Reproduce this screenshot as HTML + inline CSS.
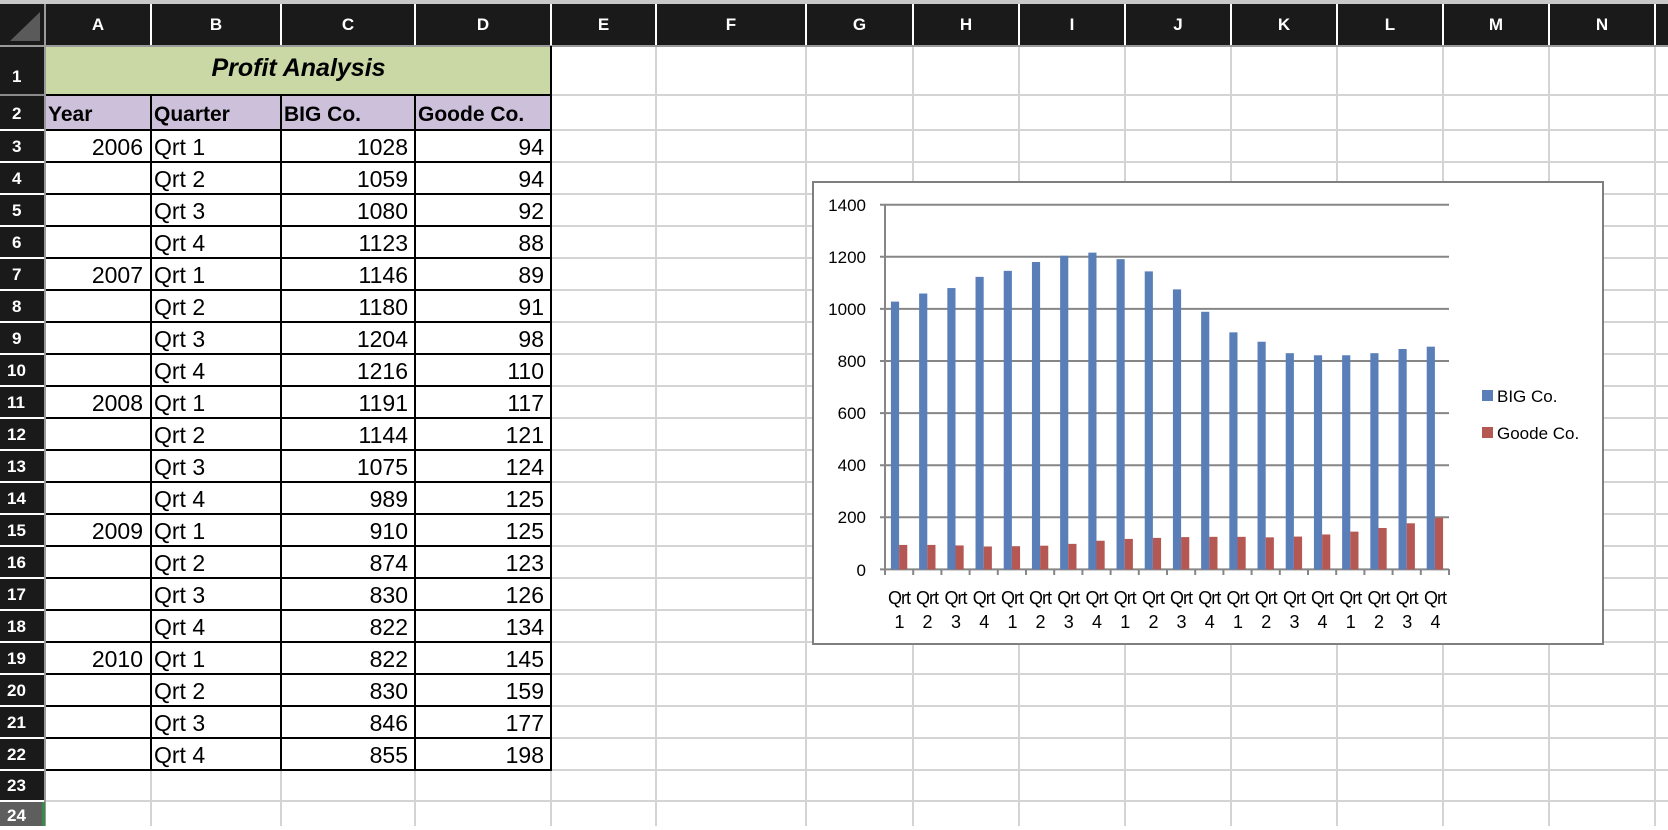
<!DOCTYPE html>
<html><head><meta charset="utf-8">
<style>
*{margin:0;padding:0;box-sizing:border-box}
body{width:1668px;height:826px;overflow:hidden;background:#fff;position:relative;font-family:"Liberation Sans",Arial,sans-serif}
.a{position:absolute}
.hd{position:absolute;top:4px;height:41px;background:#1a1a1a;color:#fff;font-weight:bold;font-size:17px;text-align:center;line-height:42px}
.rh{position:absolute;left:0;width:44px;background:#1a1a1a;color:#fff;font-weight:bold;font-size:17px;padding-left:12px}
.vl{position:absolute;width:2px;background:#d4d4d4}
.hl{position:absolute;height:2px;background:#d4d4d4}
.c{position:absolute;font-size:23px;height:32px;line-height:35px;white-space:nowrap}
.r{text-align:right}
.bk{position:absolute;background:#000}
</style></head><body>
<div class="a" style="left:0;top:0;width:1668px;height:4px;background:#c8c8c8"></div>
<div class="a" style="left:0;top:45px;width:1668px;height:2px;background:#9a9a9a"></div>
<div class="a" style="left:0;top:4px;width:44px;height:41px;background:#1a1a1a"></div>
<svg class="a" style="left:0;top:4px" width="44" height="41"><polygon points="10,37 40,37 40,8" fill="#5a5a5a"/></svg>
<div class="a" style="left:44px;top:4px;width:2px;height:822px;background:#9a9a9a"></div>
<div class="hd" style="left:46px;width:104px">A</div>
<div class="hd" style="left:152px;width:128px">B</div>
<div class="hd" style="left:282px;width:132px">C</div>
<div class="hd" style="left:416px;width:134px">D</div>
<div class="hd" style="left:552px;width:103px">E</div>
<div class="hd" style="left:657px;width:148px">F</div>
<div class="hd" style="left:807px;width:105px">G</div>
<div class="hd" style="left:914px;width:104px">H</div>
<div class="hd" style="left:1020px;width:104px">I</div>
<div class="hd" style="left:1126px;width:104px">J</div>
<div class="hd" style="left:1232px;width:104px">K</div>
<div class="hd" style="left:1338px;width:104px">L</div>
<div class="hd" style="left:1444px;width:104px">M</div>
<div class="hd" style="left:1550px;width:104px">N</div>
<div class="hd" style="left:1656px;width:12px"></div>
<div class="rh" style="top:47px;height:47px;line-height:60px">1</div>
<div class="rh" style="top:96px;height:33px;line-height:36px">2</div>
<div class="rh" style="top:131px;height:30px;line-height:32px">3</div>
<div class="rh" style="top:163px;height:30px;line-height:32px">4</div>
<div class="rh" style="top:195px;height:30px;line-height:32px">5</div>
<div class="rh" style="top:227px;height:30px;line-height:32px">6</div>
<div class="rh" style="top:259px;height:30px;line-height:32px">7</div>
<div class="rh" style="top:291px;height:30px;line-height:32px">8</div>
<div class="rh" style="top:323px;height:30px;line-height:32px">9</div>
<div class="rh" style="top:355px;height:30px;line-height:32px;padding-left:7px">10</div>
<div class="rh" style="top:387px;height:30px;line-height:32px;padding-left:7px">11</div>
<div class="rh" style="top:419px;height:30px;line-height:32px;padding-left:7px">12</div>
<div class="rh" style="top:451px;height:30px;line-height:32px;padding-left:7px">13</div>
<div class="rh" style="top:483px;height:30px;line-height:32px;padding-left:7px">14</div>
<div class="rh" style="top:515px;height:30px;line-height:32px;padding-left:7px">15</div>
<div class="rh" style="top:547px;height:30px;line-height:32px;padding-left:7px">16</div>
<div class="rh" style="top:579px;height:30px;line-height:32px;padding-left:7px">17</div>
<div class="rh" style="top:611px;height:30px;line-height:32px;padding-left:7px">18</div>
<div class="rh" style="top:643px;height:30px;line-height:32px;padding-left:7px">19</div>
<div class="rh" style="top:675px;height:30px;line-height:32px;padding-left:7px">20</div>
<div class="rh" style="top:707px;height:30px;line-height:32px;padding-left:7px">21</div>
<div class="rh" style="top:739px;height:30px;line-height:32px;padding-left:7px">22</div>
<div class="rh" style="top:771px;height:29px;line-height:30px;padding-left:7px">23</div>
<div class="rh" style="top:802px;height:24px;line-height:28px;padding-left:7px;background:#5e5e5e">24</div>
<div class="a" style="left:42px;top:802px;width:3px;height:24px;background:#3a8a4a"></div>

<div class="vl" style="left:150px;top:47px;height:779px"></div>
<div class="vl" style="left:280px;top:47px;height:779px"></div>
<div class="vl" style="left:414px;top:47px;height:779px"></div>
<div class="vl" style="left:550px;top:47px;height:779px"></div>
<div class="vl" style="left:655px;top:47px;height:779px"></div>
<div class="vl" style="left:805px;top:47px;height:779px"></div>
<div class="vl" style="left:912px;top:47px;height:779px"></div>
<div class="vl" style="left:1018px;top:47px;height:779px"></div>
<div class="vl" style="left:1124px;top:47px;height:779px"></div>
<div class="vl" style="left:1230px;top:47px;height:779px"></div>
<div class="vl" style="left:1336px;top:47px;height:779px"></div>
<div class="vl" style="left:1442px;top:47px;height:779px"></div>
<div class="vl" style="left:1548px;top:47px;height:779px"></div>
<div class="vl" style="left:1654px;top:47px;height:779px"></div>
<div class="hl" style="left:0;top:94px;background:#8a8a8a;width:44px"></div>
<div class="hl" style="left:46px;top:94px;width:1622px"></div>
<div class="hl" style="left:46px;top:129px;width:1622px"></div>
<div class="hl" style="left:46px;top:161px;width:1622px"></div>
<div class="hl" style="left:46px;top:193px;width:1622px"></div>
<div class="hl" style="left:46px;top:225px;width:1622px"></div>
<div class="hl" style="left:46px;top:257px;width:1622px"></div>
<div class="hl" style="left:46px;top:289px;width:1622px"></div>
<div class="hl" style="left:46px;top:321px;width:1622px"></div>
<div class="hl" style="left:46px;top:353px;width:1622px"></div>
<div class="hl" style="left:46px;top:385px;width:1622px"></div>
<div class="hl" style="left:46px;top:417px;width:1622px"></div>
<div class="hl" style="left:46px;top:449px;width:1622px"></div>
<div class="hl" style="left:46px;top:481px;width:1622px"></div>
<div class="hl" style="left:46px;top:513px;width:1622px"></div>
<div class="hl" style="left:46px;top:545px;width:1622px"></div>
<div class="hl" style="left:46px;top:577px;width:1622px"></div>
<div class="hl" style="left:46px;top:609px;width:1622px"></div>
<div class="hl" style="left:46px;top:641px;width:1622px"></div>
<div class="hl" style="left:46px;top:673px;width:1622px"></div>
<div class="hl" style="left:46px;top:705px;width:1622px"></div>
<div class="hl" style="left:46px;top:737px;width:1622px"></div>
<div class="hl" style="left:46px;top:769px;width:1622px"></div>
<div class="hl" style="left:46px;top:800px;width:1622px"></div>

<div class="a" style="left:46px;top:47px;width:505px;height:48px;background:#c9d8a5"></div>
<div class="a" style="left:46px;top:95px;width:505px;height:35px;background:#ccc0da"></div>
<div class="a" style="left:46px;top:130px;width:505px;height:640px;background:#fff"></div>
<div class="a" style="left:46px;top:47px;width:505px;height:48px;text-align:center;font-weight:bold;font-style:italic;font-size:25px;line-height:42px">Profit Analysis</div>
<div class="c" style="left:48px;top:96px;font-weight:bold;font-size:21px;line-height:38px">Year</div>
<div class="c" style="left:154px;top:96px;font-weight:bold;font-size:21px;line-height:38px">Quarter</div>
<div class="c" style="left:284px;top:96px;font-weight:bold;font-size:21px;line-height:38px">BIG Co.</div>
<div class="c" style="left:418px;top:96px;font-weight:bold;font-size:21px;line-height:38px">Goode Co.</div>

<div class="c r" style="left:46px;width:97px;top:130px">2006</div>
<div class="c r" style="left:46px;width:97px;top:258px">2007</div>
<div class="c r" style="left:46px;width:97px;top:386px">2008</div>
<div class="c r" style="left:46px;width:97px;top:514px">2009</div>
<div class="c r" style="left:46px;width:97px;top:642px">2010</div>

<div class="c" style="left:154px;top:130px">Qrt 1</div><div class="c r" style="left:282px;width:126px;top:130px">1028</div><div class="c r" style="left:416px;width:128px;top:130px">94</div>
<div class="c" style="left:154px;top:162px">Qrt 2</div><div class="c r" style="left:282px;width:126px;top:162px">1059</div><div class="c r" style="left:416px;width:128px;top:162px">94</div>
<div class="c" style="left:154px;top:194px">Qrt 3</div><div class="c r" style="left:282px;width:126px;top:194px">1080</div><div class="c r" style="left:416px;width:128px;top:194px">92</div>
<div class="c" style="left:154px;top:226px">Qrt 4</div><div class="c r" style="left:282px;width:126px;top:226px">1123</div><div class="c r" style="left:416px;width:128px;top:226px">88</div>
<div class="c" style="left:154px;top:258px">Qrt 1</div><div class="c r" style="left:282px;width:126px;top:258px">1146</div><div class="c r" style="left:416px;width:128px;top:258px">89</div>
<div class="c" style="left:154px;top:290px">Qrt 2</div><div class="c r" style="left:282px;width:126px;top:290px">1180</div><div class="c r" style="left:416px;width:128px;top:290px">91</div>
<div class="c" style="left:154px;top:322px">Qrt 3</div><div class="c r" style="left:282px;width:126px;top:322px">1204</div><div class="c r" style="left:416px;width:128px;top:322px">98</div>
<div class="c" style="left:154px;top:354px">Qrt 4</div><div class="c r" style="left:282px;width:126px;top:354px">1216</div><div class="c r" style="left:416px;width:128px;top:354px">110</div>
<div class="c" style="left:154px;top:386px">Qrt 1</div><div class="c r" style="left:282px;width:126px;top:386px">1191</div><div class="c r" style="left:416px;width:128px;top:386px">117</div>
<div class="c" style="left:154px;top:418px">Qrt 2</div><div class="c r" style="left:282px;width:126px;top:418px">1144</div><div class="c r" style="left:416px;width:128px;top:418px">121</div>
<div class="c" style="left:154px;top:450px">Qrt 3</div><div class="c r" style="left:282px;width:126px;top:450px">1075</div><div class="c r" style="left:416px;width:128px;top:450px">124</div>
<div class="c" style="left:154px;top:482px">Qrt 4</div><div class="c r" style="left:282px;width:126px;top:482px">989</div><div class="c r" style="left:416px;width:128px;top:482px">125</div>
<div class="c" style="left:154px;top:514px">Qrt 1</div><div class="c r" style="left:282px;width:126px;top:514px">910</div><div class="c r" style="left:416px;width:128px;top:514px">125</div>
<div class="c" style="left:154px;top:546px">Qrt 2</div><div class="c r" style="left:282px;width:126px;top:546px">874</div><div class="c r" style="left:416px;width:128px;top:546px">123</div>
<div class="c" style="left:154px;top:578px">Qrt 3</div><div class="c r" style="left:282px;width:126px;top:578px">830</div><div class="c r" style="left:416px;width:128px;top:578px">126</div>
<div class="c" style="left:154px;top:610px">Qrt 4</div><div class="c r" style="left:282px;width:126px;top:610px">822</div><div class="c r" style="left:416px;width:128px;top:610px">134</div>
<div class="c" style="left:154px;top:642px">Qrt 1</div><div class="c r" style="left:282px;width:126px;top:642px">822</div><div class="c r" style="left:416px;width:128px;top:642px">145</div>
<div class="c" style="left:154px;top:674px">Qrt 2</div><div class="c r" style="left:282px;width:126px;top:674px">830</div><div class="c r" style="left:416px;width:128px;top:674px">159</div>
<div class="c" style="left:154px;top:706px">Qrt 3</div><div class="c r" style="left:282px;width:126px;top:706px">846</div><div class="c r" style="left:416px;width:128px;top:706px">177</div>
<div class="c" style="left:154px;top:738px">Qrt 4</div><div class="c r" style="left:282px;width:126px;top:738px">855</div><div class="c r" style="left:416px;width:128px;top:738px">198</div>

<div class="bk" style="left:550px;top:46px;width:2px;height:725px"></div>
<div class="bk" style="left:150px;top:94px;width:2px;height:677px"></div>
<div class="bk" style="left:280px;top:94px;width:2px;height:677px"></div>
<div class="bk" style="left:414px;top:94px;width:2px;height:677px"></div>
<div class="bk" style="left:46px;top:94px;width:506px;height:2px"></div>
<div class="bk" style="left:46px;top:129px;width:506px;height:2px"></div>
<div class="bk" style="left:46px;top:161px;width:506px;height:2px"></div>
<div class="bk" style="left:46px;top:193px;width:506px;height:2px"></div>
<div class="bk" style="left:46px;top:225px;width:506px;height:2px"></div>
<div class="bk" style="left:46px;top:257px;width:506px;height:2px"></div>
<div class="bk" style="left:46px;top:289px;width:506px;height:2px"></div>
<div class="bk" style="left:46px;top:321px;width:506px;height:2px"></div>
<div class="bk" style="left:46px;top:353px;width:506px;height:2px"></div>
<div class="bk" style="left:46px;top:385px;width:506px;height:2px"></div>
<div class="bk" style="left:46px;top:417px;width:506px;height:2px"></div>
<div class="bk" style="left:46px;top:449px;width:506px;height:2px"></div>
<div class="bk" style="left:46px;top:481px;width:506px;height:2px"></div>
<div class="bk" style="left:46px;top:513px;width:506px;height:2px"></div>
<div class="bk" style="left:46px;top:545px;width:506px;height:2px"></div>
<div class="bk" style="left:46px;top:577px;width:506px;height:2px"></div>
<div class="bk" style="left:46px;top:609px;width:506px;height:2px"></div>
<div class="bk" style="left:46px;top:641px;width:506px;height:2px"></div>
<div class="bk" style="left:46px;top:673px;width:506px;height:2px"></div>
<div class="bk" style="left:46px;top:705px;width:506px;height:2px"></div>
<div class="bk" style="left:46px;top:737px;width:506px;height:2px"></div>
<div class="bk" style="left:46px;top:769px;width:506px;height:2px"></div>

<svg class="a" style="left:0;top:0" width="1668" height="826" font-family="Liberation Sans, Arial, sans-serif">
<rect x="813" y="182" width="790" height="462" fill="#fff" stroke="#7f7f7f" stroke-width="2"/>
<g stroke="#868686" stroke-width="2">
<line x1="880" y1="204.7" x2="1449" y2="204.7"/>
<line x1="880" y1="256.8" x2="1449" y2="256.8"/>
<line x1="880" y1="308.9" x2="1449" y2="308.9"/>
<line x1="880" y1="361" x2="1449" y2="361"/>
<line x1="880" y1="413.1" x2="1449" y2="413.1"/>
<line x1="880" y1="465.2" x2="1449" y2="465.2"/>
<line x1="880" y1="517.3" x2="1449" y2="517.3"/>
<line x1="880" y1="569.4" x2="1449" y2="569.4"/>
<line x1="885" y1="204" x2="885" y2="575"/>
</g>
<g transform="translate(885,569.4) scale(28.2,-0.2605)">
<g fill="#5a7fb8">
<rect x="0.21" width="0.29" height="1028"/><rect x="1.21" width="0.29" height="1059"/><rect x="2.21" width="0.29" height="1080"/><rect x="3.21" width="0.29" height="1123"/>
<rect x="4.21" width="0.29" height="1146"/><rect x="5.21" width="0.29" height="1180"/><rect x="6.21" width="0.29" height="1204"/><rect x="7.21" width="0.29" height="1216"/>
<rect x="8.21" width="0.29" height="1191"/><rect x="9.21" width="0.29" height="1144"/><rect x="10.21" width="0.29" height="1075"/><rect x="11.21" width="0.29" height="989"/>
<rect x="12.21" width="0.29" height="910"/><rect x="13.21" width="0.29" height="874"/><rect x="14.21" width="0.29" height="830"/><rect x="15.21" width="0.29" height="822"/>
<rect x="16.21" width="0.29" height="822"/><rect x="17.21" width="0.29" height="830"/><rect x="18.21" width="0.29" height="846"/><rect x="19.21" width="0.29" height="855"/>
</g>
<g fill="#b55752">
<rect x="0.5" width="0.29" height="94"/><rect x="1.5" width="0.29" height="94"/><rect x="2.5" width="0.29" height="92"/><rect x="3.5" width="0.29" height="88"/>
<rect x="4.5" width="0.29" height="89"/><rect x="5.5" width="0.29" height="91"/><rect x="6.5" width="0.29" height="98"/><rect x="7.5" width="0.29" height="110"/>
<rect x="8.5" width="0.29" height="117"/><rect x="9.5" width="0.29" height="121"/><rect x="10.5" width="0.29" height="124"/><rect x="11.5" width="0.29" height="125"/>
<rect x="12.5" width="0.29" height="125"/><rect x="13.5" width="0.29" height="123"/><rect x="14.5" width="0.29" height="126"/><rect x="15.5" width="0.29" height="134"/>
<rect x="16.5" width="0.29" height="145"/><rect x="17.5" width="0.29" height="159"/><rect x="18.5" width="0.29" height="177"/><rect x="19.5" width="0.29" height="198"/>
</g>
</g>
<g stroke="#868686" stroke-width="2">
<path d="M885 569v6M913.2 569v6M941.4 569v6M969.6 569v6M997.8 569v6M1026 569v6M1054.2 569v6M1082.4 569v6M1110.6 569v6M1138.8 569v6M1167 569v6M1195.2 569v6M1223.4 569v6M1251.6 569v6M1279.8 569v6M1308 569v6M1336.2 569v6M1364.4 569v6M1392.6 569v6M1420.8 569v6M1449 569v6"/>
</g>
<g font-size="17" fill="#000" text-anchor="end">
<text x="866" y="211">1400</text><text x="866" y="263">1200</text><text x="866" y="315">1000</text><text x="866" y="367">800</text>
<text x="866" y="419">600</text><text x="866" y="471">400</text><text x="866" y="523">200</text><text x="866" y="576">0</text>
</g>
<g font-size="18" fill="#000" text-anchor="middle" letter-spacing="-1">
<text y="604"><tspan x="899">Qrt</tspan><tspan x="927">Qrt</tspan><tspan x="955.5">Qrt</tspan><tspan x="983.7">Qrt</tspan><tspan x="1012">Qrt</tspan><tspan x="1040">Qrt</tspan><tspan x="1068.3">Qrt</tspan><tspan x="1096.5">Qrt</tspan><tspan x="1124.7">Qrt</tspan><tspan x="1153">Qrt</tspan><tspan x="1181">Qrt</tspan><tspan x="1209.3">Qrt</tspan><tspan x="1237.5">Qrt</tspan><tspan x="1265.7">Qrt</tspan><tspan x="1294">Qrt</tspan><tspan x="1322">Qrt</tspan><tspan x="1350.3">Qrt</tspan><tspan x="1378.5">Qrt</tspan><tspan x="1406.7">Qrt</tspan><tspan x="1435">Qrt</tspan></text>
<text y="628"><tspan x="899">1</tspan><tspan x="927">2</tspan><tspan x="955.5">3</tspan><tspan x="983.7">4</tspan><tspan x="1012">1</tspan><tspan x="1040">2</tspan><tspan x="1068.3">3</tspan><tspan x="1096.5">4</tspan><tspan x="1124.7">1</tspan><tspan x="1153">2</tspan><tspan x="1181">3</tspan><tspan x="1209.3">4</tspan><tspan x="1237.5">1</tspan><tspan x="1265.7">2</tspan><tspan x="1294">3</tspan><tspan x="1322">4</tspan><tspan x="1350.3">1</tspan><tspan x="1378.5">2</tspan><tspan x="1406.7">3</tspan><tspan x="1435">4</tspan></text>
</g>
<rect x="1482" y="390" width="11" height="11" fill="#5a7fb8"/>
<rect x="1482" y="427" width="11" height="11" fill="#b55752"/>
<g font-size="17" fill="#000"><text x="1497" y="402">BIG Co.</text><text x="1497" y="439">Goode Co.</text></g>
</svg>
</body></html>
